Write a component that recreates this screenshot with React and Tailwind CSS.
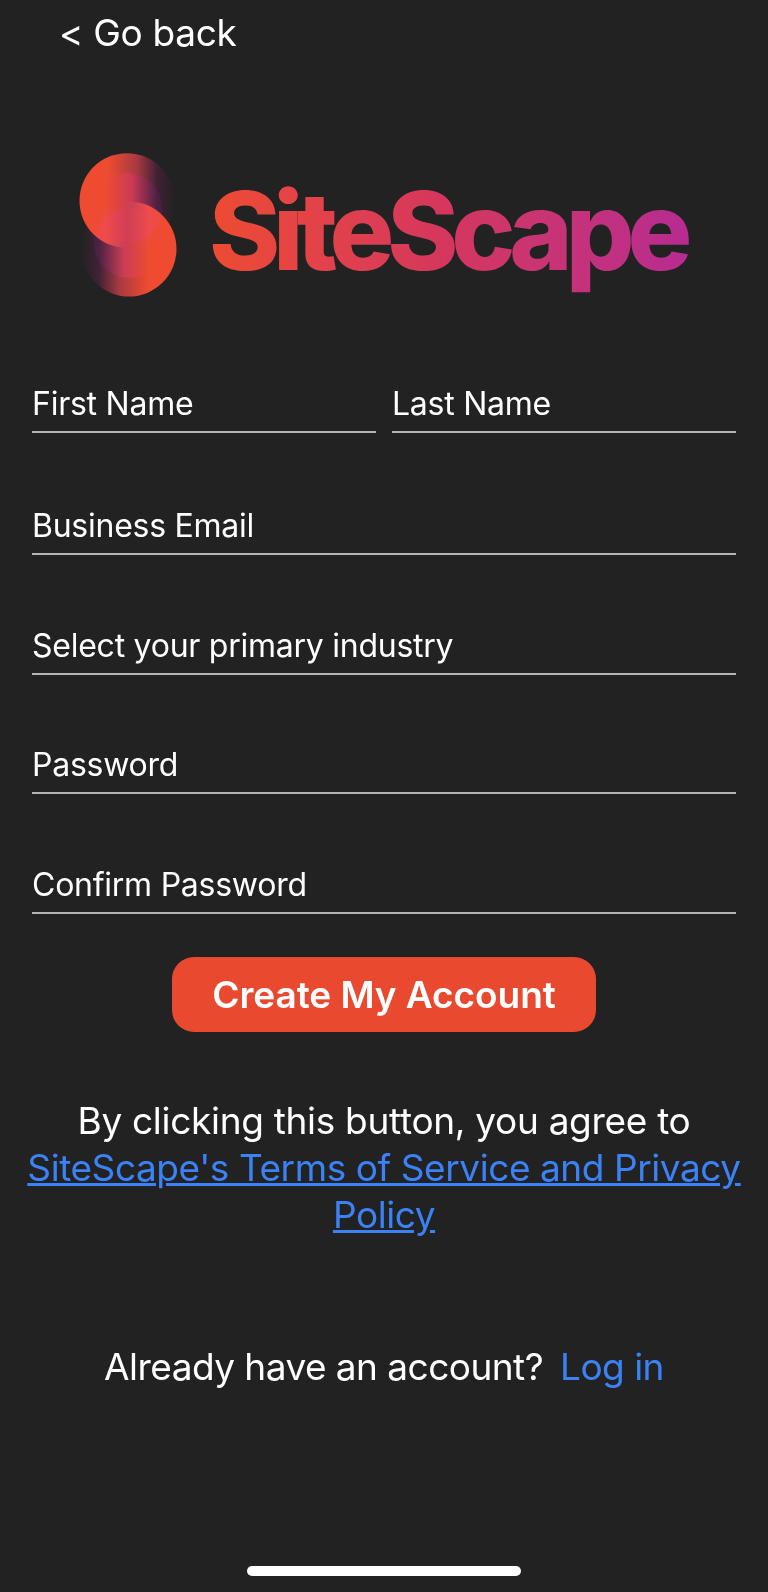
const fields = [
  { label: "Business Email", gap: "mt-[74px]" },
  { label: "Select your primary industry", gap: "mt-[72px]" },
  { label: "Password", gap: "mt-[71px]" },
  { label: "Confirm Password", gap: "mt-[72px]" },
];

function Field({ label, className = "" }) {
  return (
    <div className={`h-[48px] border-b-2 border-[#b4b4b4] text-[32px] leading-[38px] tracking-[-0.25px] text-white ${className}`}>
      {label}
    </div>
  );
}

function LogoMark() {
  return (
    <svg width="100" height="146" viewBox="0 0 100 146" className="shrink-0">
      <defs>
        <linearGradient id="upper" gradientUnits="userSpaceOnUse" x1="0" y1="0" x2="96" y2="0">
          <stop offset="0.3" stopColor="#ee4b30" />
          <stop offset="0.6" stopColor="#a83a40" />
          <stop offset="0.82" stopColor="#3f2035" />
          <stop offset="1" stopColor="#222222" />
        </linearGradient>
        <linearGradient id="lower" gradientUnits="userSpaceOnUse" x1="98" y1="0" x2="2" y2="0">
          <stop offset="0.3" stopColor="#ee4b30" />
          <stop offset="0.6" stopColor="#a83a40" />
          <stop offset="0.82" stopColor="#3f2035" />
          <stop offset="1" stopColor="#222222" />
        </linearGradient>
        <linearGradient id="upperIn" gradientUnits="userSpaceOnUse" x1="0" y1="0" x2="96" y2="0">
          <stop offset="0.28" stopColor="#ee4b30" />
          <stop offset="0.55" stopColor="#cc3a55" />
          <stop offset="0.82" stopColor="#4a2045" />
          <stop offset="1" stopColor="#2a2030" />
        </linearGradient>
        <linearGradient id="lowerIn" gradientUnits="userSpaceOnUse" x1="98" y1="0" x2="2" y2="0">
          <stop offset="0.28" stopColor="#ee4b30" />
          <stop offset="0.55" stopColor="#cc3a55" />
          <stop offset="0.82" stopColor="#4a2045" />
          <stop offset="1" stopColor="#2a2030" />
        </linearGradient>
      </defs>
      <circle cx="48" cy="47.7" r="47.5" fill="url(#upper)" />
      <circle cx="48" cy="55" r="35" fill="url(#upperIn)" />
      <circle cx="50" cy="96" r="47.5" fill="url(#lower)" className="mix-blend-lighten" />
      <circle cx="50" cy="90" r="35" fill="url(#lowerIn)" className="mix-blend-lighten" />
    </svg>
  );
}

export default function App() {
  return (
    <div className="flex min-h-screen flex-col bg-[#222222] font-['Inter','Liberation_Sans',sans-serif] text-white">
      <div className="pl-[59px] pt-[11px] text-[37px] leading-[44px] tracking-[-0.3px]">&lt; Go back</div>

      <div className="mt-[98px] flex items-start pl-[79px]">
        <LogoMark />
        <span className="ml-[30px] mt-[18px] bg-gradient-to-r from-[#ee4b30] via-[#d4365e] to-[#b72a92] bg-clip-text pb-[20px] pr-[10px] text-[108px] font-extrabold leading-[120px] tracking-[-7.2px] text-transparent">
          SiteScape
        </span>
      </div>

      <div className="mt-[74px] px-[32px]">
        <div className="grid grid-cols-2 gap-4">
          <Field label="First Name" />
          <Field label="Last Name" />
        </div>
        {fields.map((f) => (
          <Field key={f.label} label={f.label} className={f.gap} />
        ))}
      </div>

      <div className="mt-[43px] flex justify-center">
        <button className="h-[75px] w-[424px] rounded-[22px] bg-[#e8492f] text-[37px] font-semibold tracking-[-0.05px] text-white">
          Create My Account
        </button>
      </div>

      <p className="mt-[65px] px-[20px] text-center text-[37px] leading-[47px] tracking-[-0.3px]">
        By clicking this button, you agree to{" "}
        <a className="tracking-[-0.43px] text-[#3b82f6] underline">SiteScape's Terms of Service and Privacy Policy</a>
      </p>

      <div className="mt-[105px] flex justify-center gap-[17px] text-[37px] leading-[47px] tracking-[-0.53px]">
        <span>Already have an account?</span>
        <a className="text-[#3b82f6]">Log in</a>
      </div>

      <div className="mt-auto flex justify-center pb-[16px]">
        <div className="h-[10px] w-[274px] rounded-full bg-white" />
      </div>
    </div>
  );
}
